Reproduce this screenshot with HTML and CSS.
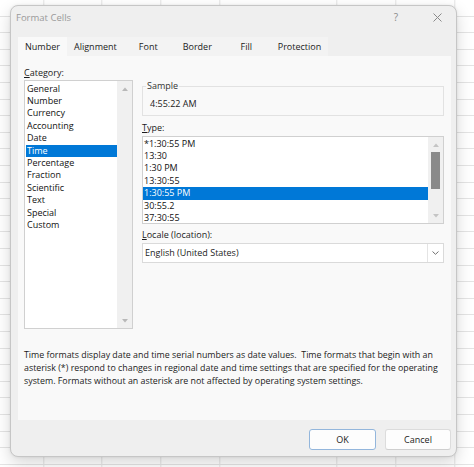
FILE: index.html
```html
<!DOCTYPE html>
<html lang="en">
<head>
<meta charset="utf-8">
<title>Format Cells</title>
<link rel="stylesheet" href="styles.css">
</head>
<body>
<div class="dialog">
  <div class="titlebar">
    <span class="title">Format Cells</span>
    <span class="help">?</span>
    <span class="close">
      <svg width="9" height="9" viewBox="0 0 9 9"><path d="M0.5 0.5 L8.5 8.5 M8.5 0.5 L0.5 8.5" stroke="#8a8a8a" stroke-width="1" fill="none"/></svg>
    </span>
  </div>
  <div class="tabs">
    <div class="tab active">Number</div>
    <div class="tab">Alignment</div>
    <div class="tab">Font</div>
    <div class="tab">Border</div>
    <div class="tab">Fill</div>
    <div class="tab">Protection</div>
  </div>
  <div class="panel">
    <div class="main">
      <div class="left">
        <div class="label cat-label"><u>C</u>ategory:</div>
        <div class="listbox catlist">
          <div class="items">
            <div class="item">General</div>
            <div class="item">Number</div>
            <div class="item">Currency</div>
            <div class="item">Accounting</div>
            <div class="item">Date</div>
            <div class="item sel">Time</div>
            <div class="item">Percentage</div>
            <div class="item">Fraction</div>
            <div class="item">Scientific</div>
            <div class="item">Text</div>
            <div class="item">Special</div>
            <div class="item">Custom</div>
          </div>
          <div class="vscroll">
            <div class="arrow-zone"><svg width="6" height="4" viewBox="0 0 6 4"><path d="M0 4 L3 0.5 L6 4 Z" fill="#b8b8b8"/></svg></div>
            <div class="arrow-zone"><svg width="6" height="4" viewBox="0 0 6 4"><path d="M0 0 L3 3.5 L6 0 Z" fill="#b8b8b8"/></svg></div>
          </div>
        </div>
      </div>
      <div class="right">
        <fieldset class="sample">
          <legend>Sample</legend>
          <div class="sample-val">4:55:22 AM</div>
        </fieldset>
        <div class="label type-label"><u>T</u>ype:</div>
        <div class="listbox typelist">
          <div class="items">
            <div class="item">*1:30:55 PM</div>
            <div class="item">13:30</div>
            <div class="item">1:30 PM</div>
            <div class="item">13:30:55</div>
            <div class="item sel">1:30:55 PM</div>
            <div class="item">30:55.2</div>
            <div class="item">37:30:55</div>
          </div>
          <div class="vscroll">
            <div class="arrow-zone"><svg width="6" height="4" viewBox="0 0 6 4"><path d="M0 4 L3 0.5 L6 4 Z" fill="#c4c4c4"/></svg></div>
            <div class="thumb"></div>
            <div class="track-rest"></div>
            <div class="arrow-zone"><svg width="6" height="4" viewBox="0 0 6 4"><path d="M0 0 L3 3.5 L6 0 Z" fill="#c4c4c4"/></svg></div>
          </div>
        </div>
        <div class="label locale-label"><u>L</u>ocale (location):</div>
        <div class="select">
          <span class="select-text">English (United States)</span>
          <span class="drop"><svg width="7" height="4" viewBox="0 0 7 4"><path d="M0.5 0.5 L3.5 3.3 L6.5 0.5" stroke="#707070" stroke-width="1" fill="none"/></svg></span>
        </div>
      </div>
    </div>
    <p class="desc">Time formats display date and time serial numbers as date values.&nbsp; Time formats that begin with an<br>asterisk (*) respond to changes in regional date and time settings that are specified for the operating<br>system. Formats without an asterisk are not affected by operating system settings.</p>
  </div>
  <div class="buttons">
    <button class="btn default">OK</button>
    <button class="btn cancel">Cancel</button>
  </div>
</div>
</body>
</html>
```
FILE: styles.css
```css
html, body {
  margin: 0;
}
body {
  width: 474px;
  height: 467px;
  overflow: hidden;
  box-sizing: border-box;
  padding: 5px 0 0 10px;
  background-color: #ffffff;
  background-image:
    repeating-linear-gradient(to right, transparent 0 57.7px, #e4e4e4 57.7px 58.7px),
    repeating-linear-gradient(to bottom, transparent 0 15.6px, #e4e4e4 15.6px 16.6px);
  background-position: -14.7px 0, 0 0;
  font-family: "Open Sans", "Noto Sans", sans-serif;
  font-size: 9px;
  color: #1b1b1b;
}
.dialog {
  width: 447px;
  height: 452px;
  box-sizing: border-box;
  border: 1px solid #c6c6c6;
  border-radius: 8px;
  background: #efefef;
  box-shadow: 0 6px 16px rgba(0, 0, 0, 0.16), 0 0 3px rgba(0, 0, 0, 0.08);
  display: flex;
  flex-direction: column;
  overflow: hidden;
}
.titlebar {
  height: 31px;
  box-sizing: border-box;
  display: flex;
  align-items: flex-start;
  padding: 5px 0 0 5px;
  line-height: 13px;
}
.title {
  flex: 1;
  font-size: 9.5px;
  color: #9a9a9a;
}
.help {
  width: 44px;
  text-align: center;
  color: #8a8a8a;
  font-size: 10px;
}
.close {
  width: 38px;
  height: 13px;
  display: flex;
  align-items: center;
  justify-content: center;
}
.tabs {
  display: flex;
  height: 19px;
  margin-left: 7px;
}
.tab {
  min-width: 49px;
  box-sizing: border-box;
  padding: 0 7px;
  text-align: center;
  line-height: 19px;
  background: #f3f3f3;
  white-space: nowrap;
}
.tab.active {
  background: #f9f9f9;
}
.panel {
  margin: 0 5px 0 7px;
  height: 364px;
  box-sizing: border-box;
  background: #f9f9f9;
  padding: 10px 7px 0 6px;
}
.main {
  display: grid;
  grid-template-columns: 109px 302px;
  column-gap: 9px;
  align-items: start;
}
.right {
  padding-top: 14px;
}
.label {
  line-height: 12px;
  color: #1b1b1b;
}
.cat-label {
  line-height: 14px;
}
.listbox {
  box-sizing: border-box;
  border: 1px solid #d0d0d0;
  background: #ffffff;
  display: flex;
}
.catlist {
  height: 249px;
}
.items {
  flex: 1;
  min-width: 0;
}
.catlist .items {
  padding: 1.5px 0 0 1px;
}
.typelist .items {
  padding-top: 0.5px;
}
.item {
  line-height: 12.4px;
  padding-left: 1px;
  white-space: nowrap;
  color: #111;
}
.item.sel {
  background: #0078d7;
  color: #ffffff;
}
.vscroll {
  width: 15px;
  background: #f0f0f0;
  display: flex;
  flex-direction: column;
  justify-content: space-between;
  align-items: center;
}
.arrow-zone {
  width: 15px;
  height: 15px;
  display: flex;
  align-items: center;
  justify-content: center;
}
.thumb {
  width: 9px;
  height: 37px;
  background: #8a8a8a;
}
.track-rest {
  flex: 1;
}
.sample {
  margin: 0;
  min-width: 0;
  border: 1px solid #e2e2e2;
  padding: 6px 0 5px 3px;
}
.sample legend {
  padding: 0 1px;
  line-height: 12px;
  color: #333;
}
.sample-val {
  margin-left: 4px;
  line-height: 12px;
}
.type-label {
  margin-top: 6px;
}
.typelist {
  margin-top: 2px;
  height: 88px;
}
.locale-label {
  margin-top: 5px;
}
.select {
  margin-top: 2px;
  height: 20px;
  box-sizing: border-box;
  border: 1px solid #dadada;
  background: #ffffff;
  display: flex;
  align-items: stretch;
}
.select-text {
  flex: 1;
  padding-left: 2px;
  line-height: 18px;
}
.drop {
  width: 15px;
  border-left: 1px solid #e4e4e4;
  display: flex;
  align-items: center;
  justify-content: center;
}
.desc {
  margin: 20px 0 0;
  line-height: 13px;
  white-space: nowrap;
  font-size: 8.85px;
  color: #1b1b1b;
}
.buttons {
  flex: 1;
  display: flex;
  justify-content: flex-end;
  align-items: flex-start;
  gap: 9px;
  padding: 9px 5px 0 0;
}
.btn {
  height: 21px;
  width: 67px;
  padding: 0;
  border: 1px solid #dcdcdc;
  border-bottom-color: #cfcfcf;
  border-radius: 3px;
  background: #fdfdfd;
  font: inherit;
  color: #1b1b1b;
}
.btn.default {
  border-color: #93b6dc;
}
.btn.cancel {
  width: 66px;
}
```
